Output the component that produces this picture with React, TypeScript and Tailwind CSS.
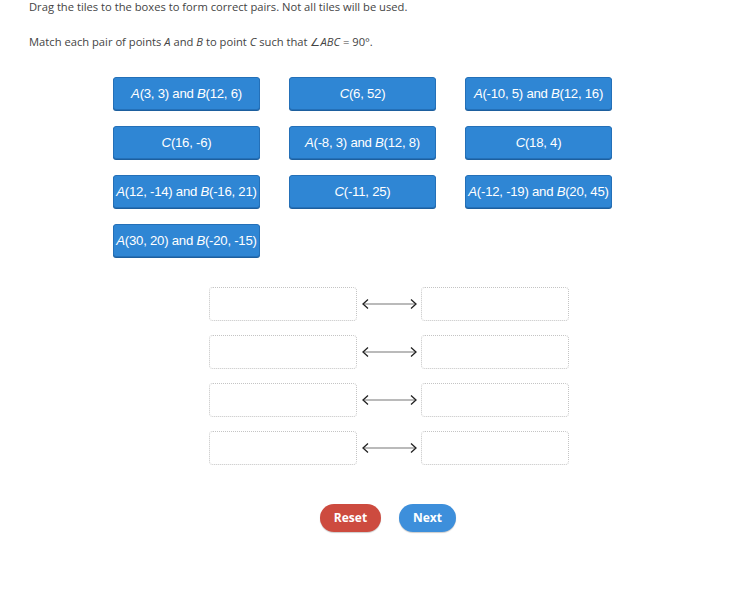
import React from "react";

type Tile = { parts: [string, boolean][] };

const t = (...parts: [string, boolean][]): Tile => ({ parts });

const tiles: Tile[] = [
  t(["A", true], ["(3, 3) and ", false], ["B", true], ["(12, 6)", false]),
  t(["C", true], ["(6, 52)", false]),
  t(["A", true], ["(-10, 5) and ", false], ["B", true], ["(12, 16)", false]),
  t(["C", true], ["(16, -6)", false]),
  t(["A", true], ["(-8, 3) and ", false], ["B", true], ["(12, 8)", false]),
  t(["C", true], ["(18, 4)", false]),
  t(["A", true], ["(12, -14) and ", false], ["B", true], ["(-16, 21)", false]),
  t(["C", true], ["(-11, 25)", false]),
  t(["A", true], ["(-12, -19) and ", false], ["B", true], ["(20, 45)", false]),
  t(["A", true], ["(30, 20) and ", false], ["B", true], ["(-20, -15)", false]),
];

function TileButton({ tile }: { tile: Tile }) {
  return (
    <div className="h-[33px] w-[147px] rounded-[3px] bg-[#2f86d4] border border-[#2470b8] shadow-[0_1px_0_#1d5f9e] flex items-center justify-center text-white text-[13.2px] tracking-[-0.25px] whitespace-nowrap font-['Liberation_Sans',Arial,sans-serif]">
      <span>
        {tile.parts.map(([s, it], i) => (it ? <i key={i}>{s}</i> : <React.Fragment key={i}>{s}</React.Fragment>))}
      </span>
    </div>
  );
}

function Arrow() {
  return (
    <svg width="57" height="12" viewBox="0 0 57 12">
      <line x1="2" y1="6" x2="55" y2="6" stroke="#777" strokeWidth="1.2" />
      <path d="M7 1.5 L2 6 L7 10.5" fill="none" stroke="#222" strokeWidth="1.3" />
      <path d="M50 1.5 L55 6 L50 10.5" fill="none" stroke="#222" strokeWidth="1.3" />
    </svg>
  );
}

function DropBox() {
  return <div className="h-[34px] w-[148px] rounded-[4px] border border-dotted border-[#c4c4c4] bg-white" />;
}

export default function App() {
  return (
    <div className="w-[735px] h-[594px] bg-white font-['Open_Sans',sans-serif] text-[#444] overflow-hidden">
      <div className="pl-[29px] pt-0 text-[11.2px] leading-[13px]">
        <p>Drag the tiles to the boxes to form correct pairs. Not all tiles will be used.</p>
        <p className="mt-[22px]">
          Match each pair of points <i>A</i> and <i>B</i> to point <i>C</i> such that ∠<i>ABC</i> = 90°.
        </p>
      </div>

      <div className="ml-[113px] mt-[29px] grid grid-cols-[147px_147px_147px] gap-x-[29px] gap-y-[16px] w-max">
        {tiles.map((tile, i) => (
          <TileButton key={i} tile={tile} />
        ))}
      </div>

      <div className="ml-[209px] mt-[30px] flex flex-col gap-[14px]">
        {[0, 1, 2, 3].map((i) => (
          <div key={i} className="flex items-center">
            <DropBox />
            <div className="w-[64px] flex justify-center">
              <Arrow />
            </div>
            <DropBox />
          </div>
        ))}
      </div>

      <div className="mt-[39px] ml-[320px] flex gap-[18px]">
        <button className="h-[28px] w-[61px] rounded-full bg-[#cd4b3f] text-white text-[12px] font-bold shadow-[0_1px_1px_rgba(0,0,0,0.2)]">
          Reset
        </button>
        <button className="h-[28px] w-[57px] rounded-full bg-[#3d8fdb] text-white text-[12px] font-bold shadow-[0_1px_1px_rgba(0,0,0,0.2)]">
          Next
        </button>
      </div>
    </div>
  );
}
